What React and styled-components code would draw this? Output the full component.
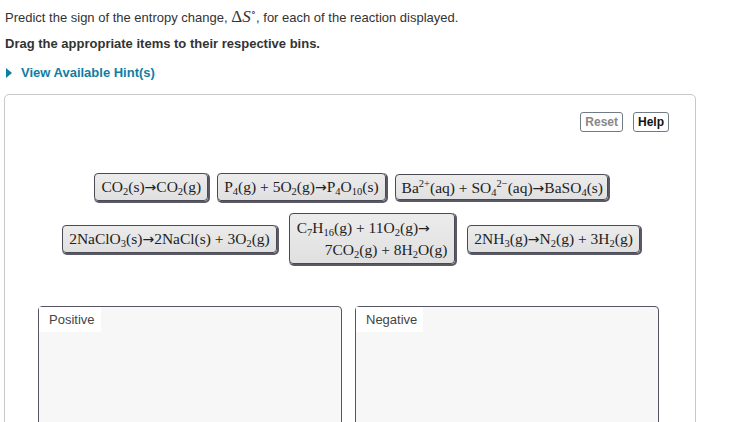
import React from 'react';
import styled, { createGlobalStyle } from 'styled-components';

const GlobalStyle = createGlobalStyle`
  body {
    margin: 0;
    background: #fff;
    font-family: "Liberation Sans", Arial, sans-serif;
    color: #333;
  }
`;

const Page = styled.div`
  width: 738px;
  height: 422px;
  overflow: hidden;
  padding: 9px 0 0 4px;
  box-sizing: border-box;
`;

const Prompt = styled.p`
  margin: 0 0 0 1px;
  font-size: 13px;
  line-height: 16px;
`;

const Math = styled.span`
  font-family: "Liberation Serif", "DejaVu Serif", serif;
  font-size: 17px;
  i { font-style: italic; }
  sup { font-size: 11px; vertical-align: 6px; line-height: 0; }
`;

const Instruction = styled.p`
  margin: 10px 0 0 1px;
  font-size: 13px;
  font-weight: bold;
  line-height: 16px;
`;

const Hint = styled.div`
  margin: 13px 0 0 2px;
  display: flex;
  align-items: center;
  gap: 9px;
  color: #0f7ea3;
  font-size: 13px;
  font-weight: bold;
`;

const Caret = styled.span`
  width: 0;
  height: 0;
  border-top: 5px solid transparent;
  border-bottom: 5px solid transparent;
  border-left: 6px solid #0f7ea3;
`;

const Panel = styled.div`
  margin-top: 14px;
  width: 692px;
  height: 360px;
  box-sizing: border-box;
  border: 1px solid #c8c8c8;
  border-radius: 5px;
  padding: 17px 26px 0 0;
`;

const Toolbar = styled.div`
  display: flex;
  justify-content: flex-end;
  gap: 10px;
`;

const ToolButton = styled.button`
  font-family: "Liberation Sans", Arial, sans-serif;
  font-size: 12px;
  font-weight: bold;
  color: ${p => (p.$muted ? '#888' : '#111')};
  background: #fff;
  border: 1px solid #6f7c86;
  border-radius: 3px;
  padding: 1px 4px;
  height: 20px;
`;

const Tiles = styled.div`
  margin-top: 41px;
  display: flex;
  flex-direction: column;
  row-gap: 12px;
  width: 692px;
`;

const Row = styled.div`
  display: flex;
  justify-content: center;
  align-items: center;
  gap: ${p => p.$gap || 10}px;
`;

const Tile = styled.div`
  font-family: "Liberation Serif", "DejaVu Serif", serif;
  font-size: 15.5px;
  color: #222;
  background: linear-gradient(#ececec, #e0e0e0);
  border: 1px solid #4a4a55;
  border-radius: 4px;
  box-shadow: 1px 1px 0 1px #5a5a66;
  padding: ${p => (p.$tall ? '3px 7px' : '0 6px')};
  height: ${p => (p.$tall ? 'auto' : '26px')};
  line-height: ${p => (p.$tall ? '21px' : '26px')};
  white-space: nowrap;
  overflow: hidden;
  box-sizing: ${p => (p.$width ? 'border-box' : 'content-box')};
  width: ${p => (p.$width ? `${p.$width}px` : 'auto')};

  sub { font-size: 10.5px; vertical-align: -3px; line-height: 0; }
  sup { font-size: 10.5px; vertical-align: 6px; line-height: 0; }
`;

const Arrow = styled.span`
  font-family: "DejaVu Sans", sans-serif;
  font-size: 14px;
`;

const Indent = styled.div`
  padding-left: 28px;
`;

const Bins = styled.div`
  margin-top: 42px;
  display: flex;
  justify-content: center;
  gap: 13px;
  padding-left: 23px;
`;

const Bin = styled.div`
  width: 304px;
  height: 140px;
  box-sizing: border-box;
  background: #f7f7f7;
  border: 1px solid #555566;
  border-radius: 4px;
`;

const BinLabel = styled.span`
  display: inline-block;
  background: #fff;
  padding: 5px 6px 5px 10px;
  font-size: 13px;
  color: #444;
`;

const to = <Arrow>→</Arrow>;

export default function App() {
  return (
    <Page>
      <GlobalStyle />
      <Prompt>
        Predict the sign of the entropy change, <Math>Δ<i>S</i><sup>∘</sup></Math>, for each of the reaction displayed.
      </Prompt>
      <Instruction>Drag the appropriate items to their respective bins.</Instruction>
      <Hint>
        <Caret />
        View Available Hint(s)
      </Hint>
      <Panel>
        <Toolbar>
          <ToolButton $muted>Reset</ToolButton>
          <ToolButton>Help</ToolButton>
        </Toolbar>
        <Tiles>
          <Row $gap={9}>
            <Tile>CO<sub>2</sub>(s){to}CO<sub>2</sub>(g)</Tile>
            <Tile>P<sub>4</sub>(g) + 5O<sub>2</sub>(g){to}P<sub>4</sub>O<sub>10</sub>(s)</Tile>
            <Tile $width={213}>
              Ba<sup>2+</sup>(aq) + SO<sub>4</sub><sup>2−</sup>(aq){to}BaSO<sub>4</sub>(s)
            </Tile>
          </Row>
          <Row $gap={12}>
            <Tile>2NaClO<sub>3</sub>(s){to}2NaCl(s) + 3O<sub>2</sub>(g)</Tile>
            <Tile $tall>
              <div>C<sub>7</sub>H<sub>16</sub>(g) + 11O<sub>2</sub>(g){to}</div>
              <Indent>7CO<sub>2</sub>(g) + 8H<sub>2</sub>O(g)</Indent>
            </Tile>
            <Tile>2NH<sub>3</sub>(g){to}N<sub>2</sub>(g) + 3H<sub>2</sub>(g)</Tile>
          </Row>
        </Tiles>
        <Bins>
          <Bin><BinLabel>Positive</BinLabel></Bin>
          <Bin><BinLabel>Negative</BinLabel></Bin>
        </Bins>
      </Panel>
    </Page>
  );
}
